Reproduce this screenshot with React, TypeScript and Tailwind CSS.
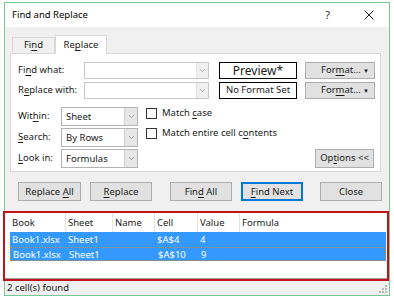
import { ChevronDown } from 'lucide-react'

function U({ children }: { children: string }) {
  return <span className="underline underline-offset-[1.5px]">{children}</span>
}

function Combo({ w }: { w: string }) {
  return (
    <div className={`flex h-[17px] ${w} border border-[#c8c8c8] bg-white`}>
      <div className="flex-1" />
      <div className="flex w-[12px] items-center justify-center border-l border-[#e0e0e0] bg-[#f0f0f0]">
        <ChevronDown className="h-[9px] w-[9px] text-[#8a8a8a]" strokeWidth={1.5} />
      </div>
    </div>
  )
}

function Select({ value }: { value: string }) {
  return (
    <div className="flex h-[19px] w-[77px] border border-[#b4b4b4] bg-white">
      <div className="flex-1 pl-[4px] leading-[17px]">{value}</div>
      <div className="flex w-[13px] items-center justify-center border-l border-[#d0d0d0] bg-[#e6e6e6]">
        <ChevronDown className="h-[9px] w-[9px] text-[#6d6d6d]" strokeWidth={1.5} />
      </div>
    </div>
  )
}

function Btn({ children, w, def }: { children: React.ReactNode; w: string; def?: boolean }) {
  return (
    <div
      className={`flex h-[19px] ${w} items-center justify-center whitespace-nowrap border bg-[#e1e1e1] ${
        def ? 'border-[#0078d7] shadow-[inset_0_0_0_1px_#0078d7]' : 'border-[#adadad]'
      }`}
    >
      {children}
    </div>
  )
}

function FormatBtn() {
  return (
    <div className="flex h-[17px] w-[70px] items-center whitespace-nowrap border border-[#adadad] bg-[#e1e1e1] pl-[15px] pr-[5px]">
      <span className="flex-1">
        For<U>m</U>at...
      </span>
      <span className="text-[6px] leading-none">▼</span>
    </div>
  )
}

function Check({ children }: { children: React.ReactNode }) {
  return (
    <div className="flex h-[11px] items-center gap-[5px] whitespace-nowrap">
      <div className="h-[11px] w-[11px] border border-[#333] bg-white" />
      <span>{children}</span>
    </div>
  )
}

const cols = [
  { name: 'Book', w: 'w-[56px]' },
  { name: 'Sheet', w: 'w-[47px]' },
  { name: 'Name', w: 'w-[42px]' },
  { name: 'Cell', w: 'w-[43px]' },
  { name: 'Value', w: 'w-[42px]' },
  { name: 'Formula', w: 'flex-1' },
]

const rows = [
  ['Book1.xlsx', 'Sheet1', '', '$A$4', '4', ''],
  ['Book1.xlsx', 'Sheet1', '', '$A$10', '9', ''],
]

export default function App() {
  return (
    <div className="h-[300px] w-[394px] overflow-hidden bg-white pl-[4px] pt-[2px] font-['Noto_Sans',sans-serif] text-[9.5px] text-[#1a1a1a]">
      <div className="flex h-[294px] w-[386px] flex-col border border-[#7cc597] bg-[#f0f0f0]">
        {/* title bar */}
        <div className="flex h-[24px] shrink-0 items-center bg-white pl-[7px]">
          <span className="flex-1 text-black">Find and Replace</span>
          <span className="mr-[34px] text-[11px] text-[#333]">?</span>
          <svg width="10" height="10" viewBox="0 0 10 10" className="mr-[15px]">
            <path d="M0.5 0.5 L9.5 9.5 M9.5 0.5 L0.5 9.5" stroke="#222" strokeWidth="1" />
          </svg>
        </div>

        {/* tabs */}
        <div className="mt-[8px] flex h-[18px] items-end pl-[7px]">
          <div className="flex h-[16px] w-[43px] items-center justify-center border border-b-0 border-[#d9d9d9] bg-[#f0f0f0]">
            Fi<U>n</U>d
          </div>
          <div className="relative z-10 -mb-px flex h-[19px] w-[52px] items-center justify-center border border-b-0 border-[#d9d9d9] bg-white">
            Re<U>p</U>lace
          </div>
        </div>

        {/* panel */}
        <div className="ml-[5px] flex h-[120px] w-[371px] flex-col border border-[#d9d9d9] bg-white pl-[7px] pt-[8px]">
          <div className="flex h-[17px] items-center whitespace-nowrap">
            <span className="w-[66px]">
              Fi<U>n</U>d what:
            </span>
            <Combo w="w-[125px]" />
            <div className="ml-[10px] flex h-[17px] w-[78px] items-center justify-center border border-black text-[12px]">
              Preview*
            </div>
            <div className="ml-[8px]">
              <FormatBtn />
            </div>
          </div>
          <div className="mt-[3px] flex h-[17px] items-center whitespace-nowrap">
            <span className="w-[66px]">
              R<U>e</U>place with:
            </span>
            <Combo w="w-[125px]" />
            <div className="ml-[10px] flex h-[17px] w-[78px] items-center justify-center border border-black">
              No Format Set
            </div>
            <div className="ml-[8px]">
              <FormatBtn />
            </div>
          </div>

          <div className="mt-[8px] flex">
            <div className="flex flex-col gap-[2px]">
              <div className="flex items-center">
                <span className="w-[43px]">
                  Wit<U>h</U>in:
                </span>
                <Select value="Sheet" />
              </div>
              <div className="flex items-center">
                <span className="w-[43px]">
                  <U>S</U>earch:
                </span>
                <Select value="By Rows" />
              </div>
              <div className="flex items-center whitespace-nowrap">
                <span className="w-[43px]">
                  <U>L</U>ook in:
                </span>
                <Select value="Formulas" />
              </div>
            </div>
            <div className="ml-[8px] mt-[1px] flex flex-col gap-[9px]">
              <Check>
                Match <U>c</U>ase
              </Check>
              <Check>
                Match entire cell c<U>o</U>ntents
              </Check>
            </div>
            <div className="ml-auto mr-[6px] flex items-end">
              <Btn w="w-[59px]">
                Op<U>t</U>ions &lt;&lt;
              </Btn>
            </div>
          </div>
        </div>

        {/* buttons */}
        <div className="mt-[10px] flex h-[19px] pl-[13px]">
          <Btn w="w-[63px]">
            Replace&nbsp;<U>A</U>ll
          </Btn>
          <div className="ml-[9px]">
            <Btn w="w-[62px]">
              <U>R</U>eplace
            </Btn>
          </div>
          <div className="ml-[18px]">
            <Btn w="w-[62px]">
              Fin<U>d</U>&nbsp;All
            </Btn>
          </div>
          <div className="ml-[9px]">
            <Btn w="w-[62px]" def>
              <U>F</U>ind&nbsp;Next
            </Btn>
          </div>
          <div className="ml-[17px]">
            <Btn w="w-[62px]">Close</Btn>
          </div>
        </div>

        {/* results */}
        <div className="-ml-[2px] mt-[10px] flex h-[70px] w-[386px] flex-col border-2 border-[#c0141c] bg-white">
          <div className="flex flex-1 flex-col border-b border-[#a0a0a0] pl-[5px] pr-[1px]">
            <div className="flex h-[19px] items-center">
              {cols.map((c) => (
                <div key={c.name} className={`${c.w} flex h-full items-center border-r border-[#e5e5e5] pl-[2px] last:border-r-0`}>
                  {c.name}
                </div>
              ))}
            </div>
            {rows.map((r, i) => (
              <div
                key={i}
                className={`flex items-center bg-[#3399ff] text-white ${
                  i === 1 ? 'h-[14px] border border-dotted border-[#c88a3a]' : 'h-[15px]'
                }`}
              >
                {r.map((v, j) => (
                  <div key={j} className={`${cols[j].w} pl-[2px] leading-[13px]`}>
                    {v}
                  </div>
                ))}
              </div>
            ))}
          </div>
        </div>

        {/* status */}
        <div className="relative flex flex-1 items-center pl-[2px]">
          <span>2 cell(s) found</span>
          <svg width="8" height="8" viewBox="0 0 8 8" className="absolute bottom-[2px] right-[2px]">
            <rect x="6" y="0" width="2" height="2" fill="#b8b8b8" />
            <rect x="3" y="3" width="2" height="2" fill="#b8b8b8" />
            <rect x="6" y="3" width="2" height="2" fill="#b8b8b8" />
            <rect x="0" y="6" width="2" height="2" fill="#b8b8b8" />
            <rect x="3" y="6" width="2" height="2" fill="#b8b8b8" />
            <rect x="6" y="6" width="2" height="2" fill="#b8b8b8" />
          </svg>
        </div>
      </div>
    </div>
  )
}
